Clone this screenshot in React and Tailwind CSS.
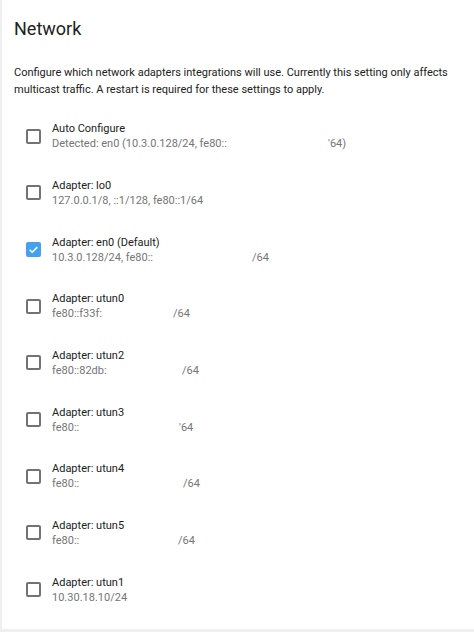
import React from "react";

const adapters = [
  { label: "Auto Configure", head: "Detected: en0 (10.3.0.128/24, fe80::", headW: "w-[276px]", tail: "'64)", checked: false },
  { label: "Adapter: lo0", head: "127.0.0.1/8, ::1/128, fe80::1/64", checked: false },
  { label: "Adapter: en0 (Default)", head: "10.3.0.128/24, fe80::", headW: "w-[200px]", tail: "/64", checked: true },
  { label: "Adapter: utun0", head: "fe80::f33f:", headW: "w-[121px]", tail: "/64", checked: false },
  { label: "Adapter: utun2", head: "fe80::82db:", headW: "w-[130px]", tail: "/64", checked: false },
  { label: "Adapter: utun3", head: "fe80::", headW: "w-[127px]", tail: "'64", checked: false },
  { label: "Adapter: utun4", head: "fe80::", headW: "w-[131px]", tail: "/64", checked: false },
  { label: "Adapter: utun5", head: "fe80::", headW: "w-[126px]", tail: "/64", checked: false },
  { label: "Adapter: utun1", head: "10.30.18.10/24", checked: false },
];

const Checkbox = ({ checked }) =>
  checked ? (
    <div className="w-[15px] h-[15px] rounded-[2px] bg-[#43a1f0] flex items-center justify-center">
      <svg viewBox="0 0 24 24" className="w-[13px] h-[13px]" fill="none" stroke="white" strokeWidth="3">
        <path d="M5 12.5l4.5 4.5L19 7.5" />
      </svg>
    </div>
  ) : (
    <div className="w-[15px] h-[15px] rounded-[2px] border-2 border-[#737373]" />
  );

const App = () => {
  return (
    <div
      className="bg-[#efefef] pl-[2px] pb-[3px] w-full"
      style={{ fontFamily: "Roboto, 'Liberation Sans', sans-serif" }}
    >
      <div className="bg-white pl-[12px] pr-4 pt-[15px] pb-[11px]">
        <h1 className="text-[18px] leading-[28px] text-[#212121] font-normal">Network</h1>
        <p className="mt-[22px] text-[11px] leading-[16.5px] text-[#212121]">
          Configure which network adapters integrations will use. Currently this setting only affects
          multicast traffic. A restart is required for these settings to apply.
        </p>
        <div className="mt-[10px] flex flex-col">
          {adapters.map((a, i) => (
            <div key={i} className="h-[56.67px] flex items-center">
              <div className="w-[38px] pl-[12px] flex items-center">
                <Checkbox checked={a.checked} />
              </div>
              <div className="flex flex-col text-[11px] leading-[15px] whitespace-nowrap">
                <span className="text-[#212121]">{a.label}</span>
                <span className="text-[#757575]">
                  <span className={`inline-block ${a.headW || ""}`}>{a.head}</span>
                  {a.tail}
                </span>
              </div>
            </div>
          ))}
        </div>
      </div>
    </div>
  );
};

export default App;
